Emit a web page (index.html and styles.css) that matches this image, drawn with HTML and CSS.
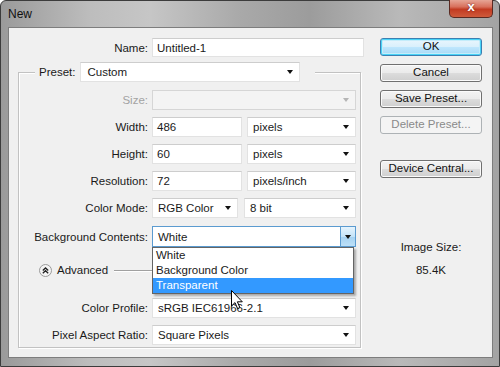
FILE: index.html
```html
<!DOCTYPE html>
<html>
<head>
<meta charset="utf-8">
<link rel="stylesheet" href="styles.css">
</head>
<body>
<div class="window">
  <div class="titlebar">
    <span class="title">New</span>
    <div class="close">x</div>
  </div>
  <div class="client">
    <div class="form">
      <div class="row name-row">
        <span class="lbl">Name:</span>
        <div class="field text wide">Untitled-1</div>
      </div>
      <div class="group">
        <div class="legend">
          <span class="lbl-inline">Preset:</span>
          <div class="field select preset"><span>Custom</span><i class="arr"></i></div>
        </div>
        <div class="row first disabled">
          <span class="lbl">Size:</span>
          <div class="field select off"><span></span><i class="arr"></i></div>
        </div>
        <div class="row">
          <span class="lbl">Width:</span>
          <div class="pair">
            <div class="field text w90">486</div>
            <div class="field select w109"><span>pixels</span><i class="arr"></i></div>
          </div>
        </div>
        <div class="row">
          <span class="lbl">Height:</span>
          <div class="pair">
            <div class="field text w90">60</div>
            <div class="field select w109"><span>pixels</span><i class="arr"></i></div>
          </div>
        </div>
        <div class="row">
          <span class="lbl">Resolution:</span>
          <div class="pair">
            <div class="field text w90">72</div>
            <div class="field select w109"><span>pixels/inch</span><i class="arr"></i></div>
          </div>
        </div>
        <div class="row">
          <span class="lbl">Color Mode:</span>
          <div class="pair gap6">
            <div class="field select w86"><span>RGB Color</span><i class="arr"></i></div>
            <div class="field select w112"><span>8 bit</span><i class="arr"></i></div>
          </div>
        </div>
        <div class="row bg-row">
          <span class="lbl">Background Contents:</span>
          <div class="field select focus">
            <span>White</span>
            <span class="drop-btn"><i class="arr"></i></span>
            <div class="dropdown">
              <div class="item">White</div>
              <div class="item">Background Color</div>
              <div class="item sel">Transparent</div>
            </div>
          </div>
        </div>
        <div class="advanced">
          <span class="adv-icon"><svg width="13" height="13" viewBox="0 0 13 13"><circle cx="6.5" cy="6.5" r="6" fill="#f4f4f4" stroke="#9a9a9a"/><path d="M3.8 6.4 L6.5 3.9 L9.2 6.4 M3.8 9.2 L6.5 6.7 L9.2 9.2" fill="none" stroke="#222" stroke-width="1.3"/></svg></span>
          <span class="adv-text">Advanced</span>
          <span class="adv-line"></span>
        </div>
        <div class="row profile">
          <span class="lbl">Color Profile:</span>
          <div class="field select"><span>sRGB IEC61966-2.1</span><i class="arr"></i></div>
        </div>
        <div class="row">
          <span class="lbl">Pixel Aspect Ratio:</span>
          <div class="field select"><span>Square Pixels</span><i class="arr"></i></div>
        </div>
      </div>
    </div>
    <div class="side">
      <div class="btn default">OK</div>
      <div class="btn">Cancel</div>
      <div class="btn">Save Preset...</div>
      <div class="btn disabled-btn">Delete Preset...</div>
      <div class="btn device">Device Central...</div>
      <div class="img-size">Image Size:</div>
      <div class="img-val">85.4K</div>
    </div>
  </div>
  <svg class="cursor" width="13" height="20" viewBox="0 0 13 20"><path d="M0.5 0.5 L0.5 16 L4 12.6 L6.6 18.6 L8.9 17.6 L6.4 11.8 L11.3 11.8 Z" fill="#fff" stroke="#000" stroke-width="1"/></svg>
</div>
</body>
</html>
```
FILE: styles.css
```css
html, body {
  margin: 0;
  padding: 0;
}
body {
  width: 500px;
  height: 367px;
  overflow: hidden;
  font-family: "Liberation Sans", Arial, sans-serif;
  font-size: 11.5px;
  color: #1a1a1a;
}
.window {
  position: relative;
  width: 500px;
  height: 367px;
  box-sizing: border-box;
  border: 1px solid #3c3c3c;
  border-radius: 6px 6px 0 0;
  background: linear-gradient(to right, #9a9a9a 0%, #bdbdbd 18%, #c6c6c6 30%, #a9a9a9 48%, #9c9c9c 62%, #b9b9b9 80%, #a3a3a3 100%);
  display: flex;
  flex-direction: column;
}
.titlebar {
  height: 26px;
  display: flex;
  align-items: flex-start;
}
.title {
  margin: 6px 0 0 7px;
  font-size: 12px;
  color: #111;
}
.close {
  margin: -1px 6px 0 auto;
  width: 44px;
  height: 18px;
  box-sizing: border-box;
  border: 1px solid #5a2a22;
  border-top: none;
  border-radius: 0 0 5px 5px;
  background: linear-gradient(to bottom, #e6a596 0%, #d8705c 40%, #c23b22 55%, #cf5a3b 100%);
  color: #fff;
  font-weight: bold;
  font-size: 13px;
  line-height: 14px;
  text-align: center;
  text-shadow: 0 0 2px #6a1a10;
}
.client {
  flex: 1;
  margin: 0 6px 8px 7px;
  background: #f0f0f0;
  border: 1px solid #7d7d7d;
  display: flex;
}
.form {
  width: 371px;
  padding-top: 10px;
}
.row {
  display: grid;
  grid-template-columns: 129px 204px;
  column-gap: 4px;
  align-items: center;
  height: 20px;
  margin-top: 7px;
}
.name-row {
  grid-template-columns: 139px 212px;
  margin-top: 0;
  height: 19px;
}
.lbl {
  text-align: right;
  white-space: nowrap;
}
.field {
  box-sizing: border-box;
  height: 20px;
  background: #fff;
  border: 1px solid #e2e2e2;
  border-top-color: #cdcdcd;
  display: flex;
  align-items: center;
  padding-left: 5px;
  white-space: nowrap;
  position: relative;
}
.name-row .field {
  height: 19px;
}
.select span:first-child {
  flex: 1;
}
.arr {
  width: 0;
  height: 0;
  border-left: 3.5px solid transparent;
  border-right: 3.5px solid transparent;
  border-top: 4px solid #111;
  margin-right: 6px;
}
.disabled .lbl {
  color: #a3a3a3;
}
.off {
  background: #f4f4f4;
  border-color: #d6d6d6;
}
.off .arr {
  border-top-color: #b5b5b5;
}
.group {
  margin: 15px 0 0 9px;
  width: 343px;
  box-sizing: border-box;
  height: 276px;
  border: 1px solid #c2c2c2;
  box-shadow: inset 1px 1px 0 #fff, 1px 1px 0 #fff;
}
.legend {
  display: flex;
  align-items: center;
  margin: -11px 0 0 16px;
  width: 270px;
  padding: 0 6px 0 4px;
  background: #f0f0f0;
  height: 20px;
}
.lbl-inline {
  margin-right: 5px;
}
.preset {
  width: 220px;
  padding-left: 6px;
}
.row.first {
  margin-top: 8px;
}
.pair {
  display: flex;
  gap: 5px;
}
.pair.gap6 {
  gap: 6px;
}
.w90 { width: 90px; }
.w109 { width: 109px; }
.w86 { width: 86px; }
.w112 { width: 112px; }
.text {
  padding-left: 4px;
}
.focus {
  border: 1px solid #5b9bd0;
  height: 21px;
  overflow: visible;
}
.bg-row {
  height: 21px;
  margin-top: 8px;
}
.drop-btn {
  width: 15px;
  height: 19px;
  box-sizing: border-box;
  border-left: 1px solid #5b9bd0;
  background: linear-gradient(to bottom, #e6f4fd 0%, #c4e3f8 50%, #a5d1f1 51%, #bde0f7 100%);
  display: flex;
  align-items: center;
  justify-content: center;
}
.drop-btn .arr {
  margin: 0;
}
.dropdown {
  position: absolute;
  top: 20px;
  left: -1px;
  width: 202px;
  box-sizing: border-box;
  background: #fff;
  border: 1px solid #646464;
  box-shadow: 2px 2px 2px rgba(0, 0, 0, 0.3);
  z-index: 5;
}
.item {
  height: 15px;
  line-height: 15px;
  padding-left: 3px;
}
.item.sel {
  background: #3399ff;
  color: #fff;
}
.advanced {
  display: flex;
  align-items: center;
  height: 20px;
  margin-top: 13px;
  padding-left: 20px;
}
.adv-icon {
  display: flex;
  width: 13px;
  height: 13px;
}
.adv-text {
  margin-left: 5px;
}
.adv-line {
  margin-left: 6px;
  width: 45px;
  height: 1px;
  background: #a0a0a0;
  box-shadow: 0 1px 0 #fff;
}
.row.profile {
  margin-top: 18px;
}
.side {
  width: 102px;
  padding-top: 10px;
  display: flex;
  flex-direction: column;
}
.btn {
  box-sizing: border-box;
  height: 18px;
  margin-bottom: 8px;
  border: 1px solid #707070;
  border-radius: 3px;
  background: linear-gradient(to bottom, #f3f3f3 0%, #ebebeb 48%, #dcdcdc 52%, #cfcfcf 100%);
  box-shadow: inset 0 0 0 1px #fbfbfb;
  text-align: center;
  line-height: 15px;
  color: #111;
}
.btn.default {
  border-color: #3c7fb1;
  box-shadow: inset 0 0 0 1px #48d3f7, inset 0 0 0 2px #c4ecfa;
  background: linear-gradient(to bottom, #eaf6fd 0%, #d9f0fc 48%, #bee6fd 52%, #a7d9f5 100%);
}
.btn.disabled-btn {
  border-color: #adb2b5;
  background: #f4f4f4;
  color: #8a8a8a;
  box-shadow: none;
}
.btn.device {
  margin-top: 18px;
}
.img-size {
  margin-top: 54px;
  text-align: center;
  line-height: 14px;
}
.img-val {
  margin-top: 9px;
  text-align: center;
  line-height: 14px;
}
.cursor {
  position: absolute;
  left: 230px;
  top: 289px;
  z-index: 10;
}
```
